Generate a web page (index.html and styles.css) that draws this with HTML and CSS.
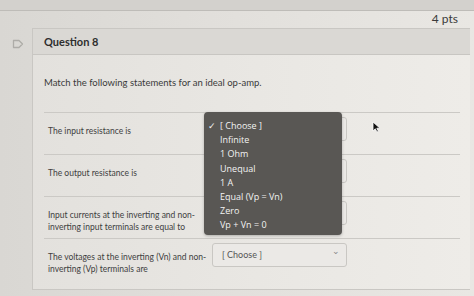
FILE: index.html
```html
<!DOCTYPE html>
<html lang="en">
<head>
    <meta charset="UTF-8">
    <meta name="viewport" content="width=device-width, initial-scale=1.0">
    <title>Question 8</title>
    <link rel="stylesheet" href="styles.css">
</head>
<body>

    <div class="prev-question"></div>

    <div class="pts">4 pts</div>

    <div class="quiz">
        <div class="gutter">
            <!-- flag icon -->
            <svg class="flag" width="12" height="10" viewBox="0 0 12 10">
                <path d="M1.5 1.5 H7 L10.5 5 L7 8.5 H1.5 Z" fill="none" stroke="#aeaca8" stroke-width="1.3" stroke-linejoin="round"/>
            </svg>
        </div>

        <div class="question">
            <div class="question-header">Question 8</div>

            <div class="question-body">
                <p class="intro">Match the following statements for an ideal op-amp.</p>

                <div class="row">
                    <div class="label">The input resistance is</div>
                    <div class="select-wrap">
                        <div class="select">[ Choose ]<span class="chev">&#8964;</span></div>
                        <!-- open dropdown -->
                        <ul class="menu">
                            <li><span class="check">&#10003;</span>[ Choose ]</li>
                            <li>Infinite</li>
                            <li>1 Ohm</li>
                            <li>Unequal</li>
                            <li>1 A</li>
                            <li>Equal (Vp = Vn)</li>
                            <li>Zero</li>
                            <li>Vp + Vn = 0</li>
                        </ul>
                    </div>
                    <svg class="cursor" width="9" height="12" viewBox="0 0 9 12">
                        <path d="M1 1 L1 10 L3.3 7.8 L5 11 L6.4 10.3 L4.8 7.2 L8 7.2 Z" fill="#111" stroke="#fff" stroke-width="0.8"/>
                    </svg>
                </div>

                <div class="row">
                    <div class="label">The output resistance is</div>
                    <div class="select-wrap">
                        <div class="select">[ Choose ]<span class="chev">&#8964;</span></div>
                    </div>
                </div>

                <div class="row">
                    <div class="label">Input currents at the inverting and non-<br>inverting input terminals are equal to</div>
                    <div class="select-wrap">
                        <div class="select">[ Choose ]<span class="chev">&#8964;</span></div>
                    </div>
                </div>

                <div class="row">
                    <div class="label">The voltages at the inverting (Vn) and non-<br>inverting (Vp) terminals are</div>
                    <div class="select-wrap">
                        <div class="select">[ Choose ]<span class="chev">&#8964;</span></div>
                    </div>
                </div>
            </div>
        </div>
    </div>

</body>
</html>
```

FILE: styles.css
```css
body {
    margin: 0;
    height: 296px;
    overflow: hidden;
    font-family: Lato, 'Open Sans', sans-serif;
    color: #3a3a3a;
    background: linear-gradient(90deg, #d9d7d3 0%, #e2e0dc 50%, #e9e7e3 100%);
}
.prev-question {
    height: 10px;
    border-bottom: 1px solid #bebcb8;
    background-color: #d3d1cd;
}
.pts {
    height: 17px;
    text-align: right;
    padding-right: 16px;
    font-size: 12px;
    line-height: 14px;
    padding-top: 1px;
    box-sizing: border-box;
}
.quiz {
    display: flex;
}
.gutter {
    width: 32px;
    flex-shrink: 0;
}
.flag {
    display: block;
    margin: 11px 0 0 12px;
}
.question {
    flex: 1;
    margin-right: 4px;
    height: 260px;
    border: 1px solid #c9c7c3;
    border-right: none;
    background: linear-gradient(90deg, #e3e1dd 0%, #eae8e4 60%, #eeece8 100%);
}
.question-header {
    height: 25px;
    line-height: 25px;
    padding-left: 11px;
    font-size: 11px;
    font-weight: bold;
    color: #2e2e2e;
    background-color: #dad8d4;
    border-bottom: 1px solid #c8c6c2;
}
.question-body {
    padding: 0 10px 0 11px;
}
.intro {
    margin: 0;
    padding: 22px 0 23px;
    font-size: 9.5px;
    line-height: 12px;
}
.row {
    display: flex;
    height: 42px;
    box-sizing: border-box;
    padding-top: 4px;
    border-top: 1px solid #cbc9c5;
    position: relative;
}
.label {
    width: 163px;
    flex-shrink: 0;
    padding: 8px 0 0 4px;
    box-sizing: border-box;
    font-size: 8.5px;
    line-height: 12px;
    white-space: nowrap;
    color: #404040;
}
.select-wrap {
    position: relative;
    margin-left: 5px;
}
.select {
    width: 135px;
    height: 24px;
    box-sizing: border-box;
    padding-left: 9px;
    line-height: 22px;
    font-size: 9px;
    color: #555;
    border: 1px solid #c9c7c3;
    border-radius: 3px;
    background-color: #ebe9e6;
    position: relative;
}
.chev {
    position: absolute;
    right: 6px;
    top: -4px;
    font-size: 9px;
    color: #888;
}
.menu {
    position: absolute;
    z-index: 10;
    top: -5px;
    left: -8px;
    width: 138px;
    margin: 0;
    padding: 7px 0 2px;
    list-style: none;
    background-color: #595754;
    border-radius: 4px;
    box-shadow: 0 1px 3px rgba(0,0,0,0.25);
}
.menu li {
    height: 14.2px;
    line-height: 14.2px;
    padding-left: 16px;
    font-family: 'Open Sans', sans-serif;
    font-size: 9px;
    color: #f3f3f3;
    position: relative;
}
.check {
    position: absolute;
    left: 4px;
    font-size: 9px;
}
.cursor {
    position: absolute;
    left: 328px;
    top: 8px;
}
```
